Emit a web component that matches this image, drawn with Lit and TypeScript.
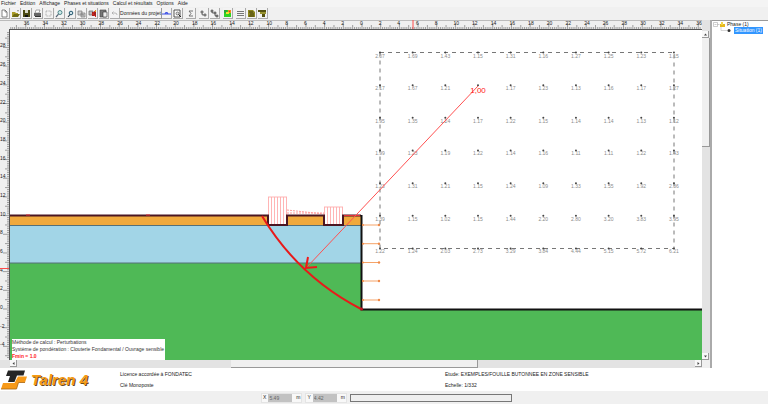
import { LitElement, html, svg, css } from "lit";
import { customElement } from "lit/decorators.js";

const ORIGIN_X = 362;
const ORIGIN_Y = 309;
const UNIT = 9.34;

const SAFETY = [
  ["2.07", "1.69", "1.43", "1.15", "1.31", "1.16", "1.27", "1.25", "1.23", "1.15"],
  ["2.17", "1.67", "1.21", "", "1.17", "1.23", "1.13", "1.16", "1.17", "1.27"],
  ["1.95", "1.35", "1.24", "1.17", "1.22", "1.15", "1.14", "1.14", "1.13", "1.12"],
  ["1.99", "1.23", "1.19", "1.22", "1.14", "1.16", "1.11", "1.11", "1.22", "1.43"],
  ["1.23", "1.31", "1.21", "1.15", "1.24", "1.09", "1.33", "1.55", "1.92", "2.36"],
  ["1.39", "1.15", "1.02", "1.15", "1.44", "2.20", "2.80", "3.20", "3.83", "3.95"],
  ["1.22", "1.24", "2.03", "2.73", "3.29", "3.84", "4.44", "5.15", "5.72", "6.21"],
];

const MENUS = ["Fichier", "Edition", "Affichage", "Phases et situations", "Calcul et résultats", "Options", "Aide"];

const ICONS: Record<string, unknown> = {
  Nouveau: svg`<path d="M2 1h3l2 2v5h-5z" fill="#fff" stroke="#555" stroke-width=".7"/><path d="M5 1v2h2" fill="none" stroke="#555" stroke-width=".6"/>`,
  Ouvrir: svg`<path d="M1 3h3l1 1h2v4h-6z" fill="#a89a28"/><path d="M1 8l2-3h6l-2 3z" fill="#6e6a14"/><path d="M6 2q1-1 2 0" stroke="#444" stroke-width=".6" fill="none"/>`,
  Enregistrer: svg`<path d="M1 1h7v7h-7z" fill="#4a4a12"/><path d="M3 1h3v3h-3z" fill="#d8d8c8"/><path d="M3 6h3v2h-3z" fill="#111"/>`,
  Imprimer: svg`<path d="M3 1h4l-1 3h-4z" fill="#fff" stroke="#555" stroke-width=".5"/><path d="M1 4h7v3h-7z" fill="#666"/><path d="M2 7h6v1h-6z" fill="#333"/>`,
  Cadre: svg`<path d="M2 2h5v5h-5z" fill="none" stroke="#999" stroke-width=".8" stroke-dasharray="1 .6"/>`,
  Loupe: svg`<circle cx="5" cy="3.500" r="2" fill="#cfeaea" stroke="#3f7d80" stroke-width=".9"/><path d="M3.500 5.200L1 8" stroke="#567" stroke-width="1.200"/>`,
  Zoom: svg`<circle cx="5" cy="4" r="1.800" fill="#cfe2ea" stroke="#245a70" stroke-width="1"/><path d="M4 5.500L2 8" stroke="#234" stroke-width="1.100"/>`,
  Copier: svg`<path d="M1 2h4v4h-4zM4 4h4v4h-4z" fill="#ccc" stroke="#777" stroke-width=".7"/><path d="M5 5.500h2M5 6.700h2" stroke="#777" stroke-width=".5"/>`,
  Couper: svg`<path d="M1 2h4v4h-4z" fill="#bbb" stroke="#666" stroke-width=".7"/><path d="M4 3h4v4h-4z" fill="#a02020"/><path d="M7 2l-3 4M5 5l3 3" stroke="#d42a1c" stroke-width="1"/><path d="M7 1h1v2h-1z" fill="#e0a020"/>`,
  Coller: svg`<path d="M1 1h6v7h-6z" fill="#777" stroke="#444" stroke-width=".6"/><path d="M4 3h4v5h-4z" fill="#eee" stroke="#333" stroke-width=".6"/>`,
  Annuler: svg`<path d="M2 4h3q2 0 2 2M2 4l1.500-1.500M2 4l1.500 1.500" fill="none" stroke="#aaa" stroke-width=".8"/>`,
  Nappe: svg`<path d="M0 5h9M3 4.500q1.500-2 3 0" stroke="#3c50e6" stroke-width="1.100" fill="#3c50e6"/>`,
  Apercu: svg`<path d="M1 1h6v7h-6z" fill="#fff" stroke="#444" stroke-width=".9"/><circle cx="4.500" cy="4.500" r="1.500" fill="#ddd" stroke="#555" stroke-width=".7"/><path d="M5.500 5.500l2.500 2.500" stroke="#222" stroke-width="1"/>`,
  Calcul: svg`<path d="M3 2h4M3 7h4M3 2l2 2.500-2 2.500" fill="none" stroke="#666" stroke-width=".9"/>`,
  Phase: svg`<path d="M2 2h2v2h-2zM5 5h2v2h-2zM3 4v2h2" fill="#999" stroke="#666" stroke-width=".7"/>`,
  Situations: svg`<path d="M1 1h2v2h-2zM4 3h2v2h-2zM6 6h2v2h-2zM2 3v1h2M5 5v2h1" fill="#888" stroke="#555" stroke-width=".6"/>`,
  Couleurs: svg`<path d="M1 1h7v7h-7z" fill="#2fd322"/><path d="M5 1h3v3h-3z" fill="#f08a1c"/><path d="M1 1h3v3h-3z" fill="#2aa83a"/><path d="M3 3h3v2h-3z" fill="#f4e12a"/><path d="M6 2h1v1h-1z" fill="#e8362c"/>`,
  Liste: svg`<path d="M1 2.500h7M1 4.500h7M1 6.500h7" stroke="#777" stroke-width="1.200"/>`,
  Couches: svg`<path d="M1 1h5l2 2v5h-7z" fill="#8c861c"/><path d="M2 3h4M3 5h4M2 7h5" stroke="#3c3a10" stroke-width=".9"/>`,
  Filtre: svg`<path d="M0 1h8v2h-8z" fill="#55520f"/><path d="M2 3h6v2h-6z" fill="#9a9430"/><path d="M4 5h3v3h-3z" fill="#55520f"/>`,
};

const TOOLS: string[][] = [
  ["Nouveau", "Ouvrir", "Enregistrer", "Imprimer", "Cadre", "Loupe", "Zoom", "Copier", "Couper", "Coller", "Annuler"],
  ["Nappe", "Apercu"],
  ["Calcul"],
  ["Phase", "Situations"],
  ["Couleurs"],
  ["Liste", "Couches", "Filtre"],
];

@customElement("section-plot")
export class SectionPlot extends LitElement {
  static styles = css`
    :host { display: block; position: relative; font: 5px/7px "Liberation Sans", Arial, sans-serif; }
    .plot { display: block; width: 100%; height: auto; }
    .ruler { fill: #222; font-size: 5px; }
    .value { fill: #8c8c8c; font-size: 5px; text-anchor: middle; }
    .result { fill: #ff2020; font-size: 8px; text-anchor: middle; }
    .legend { position: absolute; left: 12px; bottom: 0; margin: 0; background: #fff; color: #333; white-space: nowrap; padding-right: 1px; }
    .legend p { margin: 0; }
    .legend .fmin { color: #ff1a1a; font-weight: bold; }
  `;

  private horizontalTicks() {
    const out = [];
    for (let i = -188; i <= 181; i++) {
      const x = ORIGIN_X + (i * UNIT) / 5;
      const major = i % 10 === 0;
      const length = major ? 6 : i % 5 === 0 ? 4 : 2;
      out.push(svg`<path d="M${x} ${29 - length}V29" stroke="#666" stroke-width=".6"/>`);
    }
    for (let n = -36; n <= 36; n += 2) {
      out.push(svg`<text class="ruler" x=${ORIGIN_X + n * UNIT - 2} y="25">${Math.abs(n)}</text>`);
    }
    return out;
  }

  private verticalTicks() {
    const out = [];
    for (let i = -26; i <= 148; i++) {
      const y = ORIGIN_Y - (i * UNIT) / 5;
      const major = i % 10 === 0;
      const length = major ? 6 : i % 5 === 0 ? 4 : 2;
      out.push(svg`<path d="M${9 - length} ${y}H9" stroke="#666" stroke-width=".6"/>`);
    }
    for (let n = -4; n <= 28; n += 2) {
      out.push(svg`<text class="ruler" x="0" y=${ORIGIN_Y - n * UNIT}>${n}</text>`);
    }
    return out;
  }

  private searchGrid() {
    return SAFETY.map((row, r) =>
      row.map((value, c) => {
        const x = 380 + c * 32.66;
        const y = 52.5 + r * 32.66;
        return svg`<circle cx=${x} cy=${y} r="1" fill="#444"/>
          <text class="value" x=${x} y=${y + 5}>${value}</text>`;
      }),
    );
  }

  private surcharge(x: number, top: number) {
    const bars = [0, 3, 6, 9, 12, 15, 18].map((d) => svg`<path d="M${x + d + 0.5} ${top}V224"/>`);
    return svg`<path d="M${x} 215h19v9h-19z" fill="#fff"/>
      <g stroke="#ffadad" stroke-width=".9" fill="none">${bars}<path d="M${x} ${top}h19"/></g>`;
  }

  render() {
    return html`
      <svg class="plot" viewBox="0 20 702 340" role="img" aria-label="Coupe du talus">
        <path d="M0 20H702V360H0z" fill="#efefef" />
        <path d="M10 30H702V360H10z" fill="#fff" />
        <path d="M0 20.500H702" stroke="#bbb" stroke-width="1" />
        <path d="M10 29.500H702M9.500 29V360" stroke="#555" stroke-width="1" />
        ${this.horizontalTicks()} ${this.verticalTicks()}
        <path d="M413 20V29M0 268.500H9" stroke="#ff4a4a" stroke-width="1" />
        <path d="M10 215H362V225H10z" fill="#f0a93c" />
        <path d="M10 225H362V263H10z" fill="#a2d5e7" />
        <path d="M10 263H362V309H702V360H10z" fill="#4fb956" />
        <path d="M10 225.500H362M10 263H362" stroke="#547078" stroke-width="1" />
        ${this.surcharge(268, 197)} ${this.surcharge(324, 207)}
        <path d="M287 210L324 214M287 213H324" fill="none" stroke="#ff9c9c" stroke-width="1" stroke-dasharray="2 1" />
        <path d="M10 215.500H268V225H287V215.500H324V225H343V215.500H361" fill="none" stroke="#4b1622" stroke-width="2" />
        <path d="M361.500 215V309.500H702" fill="none" stroke="#111" stroke-width="2" />
        <path d="M26 215h4M146 215h4M344 215.500h16" stroke="#e0303a" stroke-width="1" />
        <g stroke="#f5a368" fill="#f08a48">
          ${[225, 243.7, 262.5, 281, 300].map(
            (y) => svg`<path d="M362 ${y}H380" stroke-width="1"/><circle cx="363" cy=${y} r="1" stroke="none"/><circle cx="379" cy=${y} r="1.200" stroke="none"/>`,
          )}
        </g>
        <path d="M380 52.500H674V248.500H380z" fill="none" stroke="#777" stroke-width="1" stroke-dasharray="4 4" />
        ${this.searchGrid()}
        <path d="M478 86L306 268" stroke="#ff5050" stroke-width="1" />
        <path d="M262 216A249 249 0 0 0 361 309" fill="none" stroke="#e81a1a" stroke-width="2" />
        <path d="M308 257L306 268L317 267" fill="none" stroke="#f01818" stroke-width="2" />
        <circle cx="361.500" cy="309" r="1.600" fill="#c01824" />
        <text class="result" x="478" y="93">1,00</text>
      </svg>
      <div class="legend">
        <p>Méthode de calcul : Perturbations</p>
        <p>Système de pondération : Clouterie Fondamental / Ouvrage sensible</p>
        <p class="fmin">Fmin = 1.0</p>
      </div>
    `;
  }
}

@customElement("app-root")
export class AppRoot extends LitElement {
  static styles = css`
    :host { display: block; min-height: 100vh; background: #f0f0f0; color: #222; font: 5px/7px "Liberation Sans", Arial, sans-serif; }
    button, input { font: inherit; color: inherit; box-sizing: border-box; margin: 0; padding: 0; border-radius: 0; }
    .menu { display: flex; gap: 2px; height: 7px; background: #f4f4f4; }
    .menu button { border: 0; background: none; padding: 0 1px; white-space: nowrap; }
    .tools { display: flex; align-items: center; gap: 3px; height: 13px; }
    .first { display: flex; align-items: center; }
    .group { display: flex; gap: 1px; }
    .tool { width: 10px; height: 11px; display: grid; place-items: center; background: #f3f3f3; border: 0 solid #aaa; border-width: 0 1px 1px 0; }
    .tool svg { width: 9px; height: 9px; display: block; }
    .data { width: 42px; height: 11px; background: #f5f5f5; border: 0 solid #999; border-width: 0 1px 1px 0; white-space: nowrap; line-height: 9px; }
    .main { display: grid; grid-template-columns: 1fr 8px 2px 56px; }
    .bar { display: flex; background: #e3e3e3; }
    .vertical { flex-direction: column; padding-top: 11px; grid-row: 1; grid-column: 2; }
    .horizontal { grid-column: 1; grid-row: 2; height: 8px; padding-left: 10px; }
    .step { flex: none; width: 7px; height: 7px; border: 0 solid #999; border-width: 0 1px 1px 0; background: #f8f8f8; display: grid; place-items: center; }
    .step svg { width: 3px; height: 3px; display: block; }
    .thumb { background: #f0f0f0; border: 0 solid #999; border-width: 0 1px 1px 0; }
    .vertical .thumb { flex: 108; }
    .vertical .rest { flex: 207; }
    .horizontal .before { flex: 214; }
    .horizontal .thumb { flex: 247; }
    .horizontal .after { flex: 217; }
    .sash { grid-column: 3; grid-row: 1 / 3; background: #aaa; }
    .tree { grid-column: 4; grid-row: 1 / 3; background: #fff; border-top: 1px solid #999; box-sizing: border-box; }
    .node { display: flex; align-items: center; gap: 2px; height: 6px; white-space: nowrap; margin-left: 1px; }
    .node svg { width: 12px; height: 7px; flex: none; }
    .child { margin-left: 8px; }
    .selected { background: #3296ff; color: #fff; padding: 0 1px; height: 7px; }
    .info { display: grid; grid-template-columns: 120px 325px 1fr; align-items: center; background: #fff; height: 23px; }
    .brand { display: flex; align-items: center; gap: 3px; }
    .brand svg { width: 28px; height: 21px; display: block; }
    .name { font: italic bold 15px/20px "Liberation Sans", Arial, sans-serif; color: #f59a14; text-shadow: 1px 1px 0 #6b4a1c; white-space: nowrap; }
    .lines { display: grid; gap: 4px; white-space: nowrap; }
    .lines p { margin: 0; }
    .status { display: flex; align-items: center; gap: 3px; height: 13px; padding-left: 34%; }
    .coord { display: flex; align-items: center; gap: 2px; background: #f8f8f8; padding: 0 1px; height: 10px; border: 1px solid #e4e4e4; box-sizing: border-box; }
    .coord input { width: 24px; height: 8px; border: 0; background: #c2c2c2; color: #666; padding-left: 1px; }
    .unit { width: 6px; text-align: right; }
    .progress { width: 162px; height: 8px; margin-right: auto; border: 1px solid #777; box-sizing: border-box; background: #efefef; }
  `;

  private tool(name: string) {
    return html`<button class="tool" aria-label=${name}><svg viewBox="0 0 9 9">${ICONS[name]}</svg></button>`;
  }

  private group(names: string[]) {
    return html`<div class="group">${names.map((n) => this.tool(n))}</div>`;
  }

  private step(label: string, path: string) {
    return html`<button class="step" aria-label=${label}><svg viewBox="0 0 3 3"><path d=${path} fill="#444" /></svg></button>`;
  }

  render() {
    const [first, second, ...others] = TOOLS;
    return html`
      <nav class="menu">${MENUS.map((m) => html`<button>${m}</button>`)}</nav>
      <div class="tools" role="toolbar">
        <div class="first">
          ${this.group(first)}
          <button class="data">Données du projet</button>
          ${this.group(second)}
        </div>
        ${others.map((g) => this.group(g))}
      </div>
      <main class="main">
        <section-plot></section-plot>
        <div class="bar vertical">
          ${this.step("Haut", "M0 2.500L1.500 .5L3 2.500z")}
          <div class="thumb"></div>
          <div class="rest"></div>
          ${this.step("Bas", "M0 .5L1.500 2.500L3 .5z")}
        </div>
        <div class="bar horizontal">
          ${this.step("Gauche", "M2.500 0L.5 1.500L2.500 3z")}
          <div class="before"></div>
          <div class="thumb"></div>
          <div class="after"></div>
          ${this.step("Droite", "M.5 0L2.500 1.500L.5 3z")}
        </div>
        <div class="sash"></div>
        <aside class="tree">
          <div class="node">
            <svg viewBox="0 0 12 7">
              <path d="M.5 1.500h4v4h-4zM1.500 3.500h2M4.500 3.500h2" fill="none" stroke="#aaa" stroke-width=".6" />
              <path d="M7 3h5v3h-5z" fill="#e6b91c" />
              <path d="M8 1h2v3h-2z" fill="#f2d64a" />
            </svg>
            <span>Phase (1)</span>
          </div>
          <div class="node child">
            <svg viewBox="0 0 12 7">
              <path d="M1 0v3.500h6" fill="none" stroke="#bbb" stroke-width=".6" />
              <circle cx="9" cy="3.500" r="1.500" fill="#333" />
            </svg>
            <span class="selected">Situation (1)</span>
          </div>
        </aside>
      </main>
      <section class="info">
        <div class="brand">
          <svg viewBox="0 0 28 21">
            <path d="M8 1.500H25L23.500 6.500H17L14.500 13H8L10 7H6z" fill="#262626" />
            <path d="M18 7.500H27L25 13.500H18.500L16.500 20H1L3 14H14.500z" fill="#f79a1a" />
            <path d="M1 20H16.500L18.500 13.500H25" fill="none" stroke="#a86410" stroke-width=".8" />
          </svg>
          <span class="name">Talren 4</span>
        </div>
        <div class="lines"><p>Licence accordée à FONDATEC</p><p>Clé Monoposte</p></div>
        <div class="lines"><p>Etude: EXEMPLES/FOUILLE BUTONNEE EN ZONE SENSIBLE</p><p>Echelle: 1/332</p></div>
      </section>
      <footer class="status">
        <label class="coord">X <input value="5.49" readonly /><span class="unit">m</span></label>
        <label class="coord">Y <input value="4.42" readonly /><span class="unit">m</span></label>
        <div class="progress"></div>
      </footer>
    `;
  }
}
